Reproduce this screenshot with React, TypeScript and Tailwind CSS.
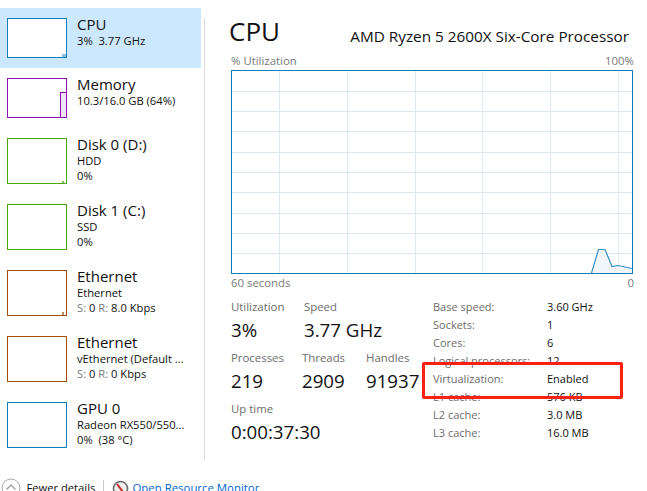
import React from "react";

const GRAPH_V = [279, 347, 415, 482, 550, 618];
const GRAPH_H = [91, 111, 131, 152, 172, 192, 213, 233, 253];

function Thumb({ color, h, children }: { color: string; h: string; children?: React.ReactNode }) {
  return (
    <div className={`relative w-[60px] ${h} border-[1px] bg-white shrink-0 overflow-hidden`} style={{ borderColor: color }}>
      {children}
    </div>
  );
}

type Item = {
  title: string;
  lines: React.ReactNode[];
  color: string;
  h: string;
  selected?: boolean;
  spark?: React.ReactNode;
  rowH: string;
};

const Dim = ({ children }: { children: React.ReactNode }) => <span className="text-[#7a7a7a]">{children}</span>;

const items: Item[] = [
  {
    title: "CPU",
    lines: ["3%\u00a0 3.77 GHz"],
    color: "#117dbb",
    h: "h-[40px]",
    selected: true,
    rowH: "h-[60px]",
    spark: <div className="absolute right-0 bottom-0 w-[4px] h-[3px] bg-[#8fbde0]" />,
  },
  {
    title: "Memory",
    lines: ["10.3/16.0 GB (64%)"],
    color: "#8b12ae",
    h: "h-[40px]",
    rowH: "h-[60px]",
    spark: <div className="absolute right-0 bottom-0 w-[6px] h-[25px] border-l border-t border-[#8b12ae] bg-[#f0e4f4]" />,
  },
  {
    title: "Disk 0 (D:)",
    lines: ["HDD", "0%"],
    color: "#4da60c",
    h: "h-[46px]",
    rowH: "h-[66px]",
    spark: <div className="absolute right-[2px] bottom-0 w-[2px] h-[2px] bg-[#7fbf50]" />,
  },
  { title: "Disk 1 (C:)", lines: ["SSD", "0%"], color: "#4da60c", h: "h-[46px]", rowH: "h-[66px]" },
  {
    title: "Ethernet",
    lines: ["Ethernet", <><Dim>S:</Dim> 0 <Dim>R:</Dim> 8.0 Kbps</>],
    color: "#a74f01",
    h: "h-[46px]",
    rowH: "h-[66px]",
    spark: <div className="absolute right-[2px] bottom-0 w-[2px] h-[3px] bg-[#c58a55]" />,
  },
  {
    title: "Ethernet",
    lines: ["vEthernet (Default ...", <><Dim>S:</Dim> 0 <Dim>R:</Dim> 0 Kbps</>],
    color: "#a74f01",
    h: "h-[46px]",
    rowH: "h-[66px]",
  },
  {
    title: "GPU 0",
    lines: ["Radeon RX550/550...", "0%\u00a0 (38 °C)"],
    color: "#117dbb",
    h: "h-[46px]",
    rowH: "h-[66px]",
  },
];

function SideItem({ item }: { item: Item }) {
  return (
    <div className={`flex items-start w-[201px] ${item.rowH} pl-[7px] pt-[10px] ${item.selected ? "bg-[#cce8ff]" : ""}`}>
      <Thumb color={item.color} h={item.h}>{item.spark}</Thumb>
      <div className="ml-[10px] -mt-[4px] text-[#111]">
        <div className="text-[15px] leading-[21px] -mb-[2px]">{item.title}</div>
        {item.lines.map((l, i) => (
          <div key={i} className="text-[11.2px] leading-[15px] whitespace-nowrap">{l}</div>
        ))}
      </div>
    </div>
  );
}

function Graph() {
  return (
    <div className="h-[204px] w-[402px] border border-[#117dbb] bg-white">
      <svg width="400" height="202" className="block">
        {GRAPH_H.map((y) => (
          <line key={y} x1="0" x2="400" y1={y - 71 + 0.5} y2={y - 71 + 0.5} stroke="#d9eaf4" />
        ))}
        {GRAPH_V.map((x) => (
          <line key={x} x1={x - 232 + 0.5} x2={x - 232 + 0.5} y1="0" y2="202" stroke="#d9eaf4" />
        ))}
        <path d="M359.5 202 L366.5 178.5 L373 178.5 L380 195.5 L386 194.5 L400 197.5 V202 Z" fill="#f1f6fa" stroke="none" />
        <path d="M359.5 202 L366.5 178.5 L373 178.5 L380 195.5 L386 194.5 L400 197.5" fill="none" stroke="#3a8fc5" strokeWidth="1.2" />
      </svg>
    </div>
  );
}

function Stat({ label, value, w }: { label: string; value: string; w: string }) {
  return (
    <div className={w}>
      <div className="text-[11.4px] leading-[16px] text-[#6d6d6d]">{label}</div>
      <div className="text-[18.7px] leading-[26px] mt-[2px] text-[#111] whitespace-nowrap">{value}</div>
    </div>
  );
}

const specs = [
  ["Base speed:", "3.60 GHz"],
  ["Sockets:", "1"],
  ["Cores:", "6"],
  ["Logical processors:", "12"],
  ["Virtualization:", "Enabled"],
  ["L1 cache:", "576 KB"],
  ["L2 cache:", "3.0 MB"],
  ["L3 cache:", "16.0 MB"],
];

export default function App() {
  return (
    <div className="relative w-[647px] h-[491px] overflow-hidden bg-white font-['Open_Sans','Noto_Sans',sans-serif] text-[#111]">
      <div className="flex h-[460px]">
        <div className="w-[204px] pt-[8px] shrink-0">
          {items.map((it, i) => <SideItem key={i} item={it} />)}
        </div>
        <div className="w-px mt-[18px] bg-[#d9d9d9] shrink-0" />
        <div className="ml-[26px] w-[403px] pt-[15px]">
          <div className="flex items-end justify-between h-[32px]">
            <div className="text-[26px] leading-[32px] -ml-[2px]">CPU</div>
            <div className="text-[15.3px] leading-[20px] mb-[1px] mr-[5px] whitespace-nowrap">AMD Ryzen 5 2600X Six-Core Processor</div>
          </div>
          <div className="flex justify-between text-[11.4px] leading-[14px] text-[#7a7a7a] mt-[7px] mb-[2px]">
            <span>% Utilization</span><span>100%</span>
          </div>
          <Graph />
          <div className="flex justify-between text-[11.4px] leading-[14px] text-[#7a7a7a] mt-[2px]">
            <span>60 seconds</span><span>0</span>
          </div>
          <div className="flex mt-[9px]">
            <div className="w-[202px]">
              <div className="flex"><Stat label="Utilization" value="3%" w="w-[73px]" /><Stat label="Speed" value="3.77 GHz" w="w-[100px]" /></div>
              <div className="flex mt-[7px]"><Stat label="Processes" value="219" w="w-[71px]" /><Stat label="Threads" value="2909" w="w-[64px]" /><Stat label="Handles" value="91937" w="w-[60px]" /></div>
              <div className="mt-[7px]"><Stat label="Up time" value="0:00:37:30" w="w-[120px]" /></div>
            </div>
            <div className="grid grid-cols-[114px_1fr] text-[11px] leading-[18px] h-fit -mt-[1px]">
              {specs.map(([k, v]) => (
                <React.Fragment key={k}>
                  <div className="text-[#6d6d6d] whitespace-nowrap">{k}</div>
                  <div className="text-[#111]">{v}</div>
                </React.Fragment>
              ))}
            </div>
          </div>
        </div>
      </div>
      <div className="flex items-center h-[36px] mt-[10px] text-[11.2px]">
        <svg width="20" height="20" viewBox="0 0 20 20" className="ml-[0.5px] shrink-0">
          <circle cx="10" cy="10" r="9" fill="none" stroke="#a8a8a8" />
          <path d="M5.5 11.5 L10 7 L14.5 11.5" fill="none" stroke="#a0a0a0" strokeWidth="1.3" />
        </svg>
        <span className="ml-[6px] w-[70px] whitespace-nowrap">Fewer details</span>
        <div className="w-px h-[16px] bg-[#c8c8c8] ml-[6px]" />
        <svg width="17" height="17" viewBox="0 0 17 17" className="ml-[8px] shrink-0">
          <circle cx="8.5" cy="8.5" r="7" fill="#f0f0f0" stroke="#6e6e6e" strokeWidth="1.6" />
          <path d="M5 4 L11 12" stroke="#c8281e" strokeWidth="2" />
        </svg>
        <span className="ml-[4px] text-[#0066cc] text-[11.4px] whitespace-nowrap">Open Resource Monitor</span>
      </div>
      <div className="absolute left-[422px] top-[362px] w-[201px] h-[37px] border-[3px] border-[#fb2012] rounded-[2px]" />
    </div>
  );
}
